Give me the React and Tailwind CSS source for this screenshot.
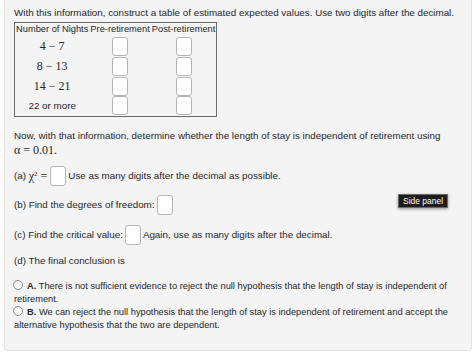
const sans = { fontFamily: '"Liberation Sans", Arial, sans-serif' };

function Box({ className = '' }) {
  return (
    <span
      className={`inline-block w-[16px] h-[19px] bg-white border border-[#b5b5b5] rounded-[3px] align-middle ${className}`}
    />
  );
}

function M({ children }) {
  return <span className="font-['Liberation_Serif',serif] text-[12px] leading-[14px]">{children}</span>;
}

function Radio() {
  return <span className="inline-block w-[10px] h-[10px] rounded-full border border-[#8a8a8a] bg-white align-[-1px] mr-[4px] -ml-[1px]" />;
}

const rows = [
  { label: <M>4 − 7</M> },
  { label: <M>8 − 13</M> },
  { label: <M>14 − 21</M> },
  { label: <span>22 or more</span> },
];

export default function App() {
  return (
    <div className="w-[474px] h-[355px] bg-white overflow-hidden" style={sans}>
      <div className="relative ml-[4px] w-[468px] h-[351px] bg-[#f4f4f4] border-x border-b border-[#e2e2e2] rounded-b-[4px] pl-[9px] pt-[6px] text-[9.8px] leading-[14px] text-[#262626]">
        <p className="whitespace-nowrap">With this information, construct a table of estimated expected values. Use two digits after the decimal.</p>

        <table className="mt-[2px] border border-[#6b6b6b] border-collapse">
          <thead>
            <tr className="h-[13px] leading-[13px] whitespace-nowrap text-[9.3px]">
              <th className="font-normal text-left px-[1px]">Number of Nights</th>
              <th className="font-normal text-left px-[1px]">Pre-retirement</th>
              <th className="font-normal text-left px-[1px]">Post-retirement</th>
            </tr>
          </thead>
          <tbody>
            {rows.map((r, i) => (
              <tr key={i} className="h-[20px]">
                <td className="text-center p-0 whitespace-nowrap">{r.label}</td>
                <td className="text-center p-0 leading-[0]"><Box /></td>
                <td className="text-center p-0 leading-[0]"><Box /></td>
              </tr>
            ))}
          </tbody>
        </table>

        <p className="mt-[12px]">
          Now, with that information, determine whether the length of stay is independent of retirement using
          <br />
          <M>α = 0.01.</M>
        </p>

        <div className="mt-[8px] flex items-center h-[20px]">
          <span>(a)&nbsp;</span>
          <M>χ<sup className="text-[7px]">2</sup> =</M>
          <Box className="ml-[3px] mr-[2px] h-[20px]" />
          <span>Use as many digits after the decimal as possible.</span>
        </div>

        <div className="mt-[9px] flex items-center h-[20px]">
          <span>(b) Find the degrees of freedom:</span>
          <Box className="ml-[2px] h-[20px]" />
        </div>

        <div className="mt-[10px] flex items-center h-[20px]">
          <span>(c) Find the critical value:</span>
          <Box className="ml-[2px] mr-[2px] h-[20px]" />
          <span>Again, use as many digits after the decimal.</span>
        </div>

        <p className="mt-[9px]">(d) The final conclusion is</p>

        <div className="mt-[12px] pr-[2px] leading-[13px] text-[9.3px]">
          <p><Radio /><b>A.</b> There is not sufficient evidence to reject the null hypothesis that the length of stay is independent of retirement.</p>
          <p><Radio /><b>B.</b> We can reject the null hypothesis that the length of stay is independent of retirement and accept the alternative hypothesis that the two are dependent.</p>
        </div>

        <div className="absolute left-[393px] top-[194px] bg-[#1c1c1c] border border-[#6a6a6a] text-white text-[8.5px] leading-[12px] px-[4px] shadow-[0_1px_3px_rgba(0,0,0,0.4)]">
          Side panel
        </div>
      </div>
    </div>
  );
}
